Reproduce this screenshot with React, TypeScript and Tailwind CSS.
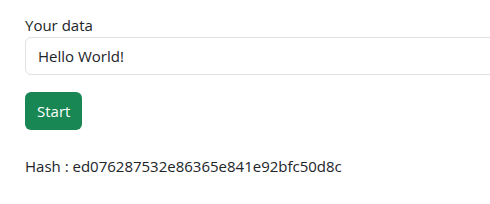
export default function App() {
  return (
    <div
      className="w-[490px] h-[204px] overflow-hidden bg-white text-[#212529] text-[15px]"
      style={{ fontFamily: '"Open Sans", sans-serif' }}
    >
      <div className="w-[520px] pl-[25px] pt-[13px]">
        <label className="block leading-6">Your data</label>
        <input
          className="block w-full h-[38px] px-3 border border-[#dee2e6] rounded-[6px] outline-none text-[15px]"
          defaultValue="Hello World!"
        />
        <button className="mt-[17px] h-[38px] px-3 rounded-[6px] bg-[#198754] text-white leading-6">
          Start
        </button>
        <p className="mt-[24px] leading-6">Hash : ed076287532e86365e841e92bfc50d8c</p>
      </div>
    </div>
  );
}
